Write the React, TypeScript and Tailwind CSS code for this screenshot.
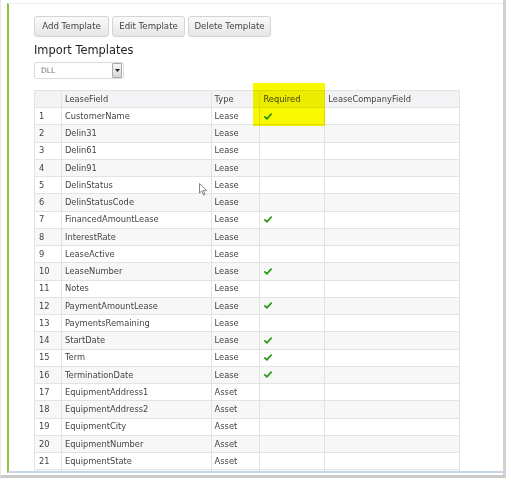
import React from 'react';

type Row = { field: string; type: string; required?: boolean };

const rows: Row[] = [
  { field: 'CustomerName', type: 'Lease', required: true },
  { field: 'Delin31', type: 'Lease' },
  { field: 'Delin61', type: 'Lease' },
  { field: 'Delin91', type: 'Lease' },
  { field: 'DelinStatus', type: 'Lease' },
  { field: 'DelinStatusCode', type: 'Lease' },
  { field: 'FinancedAmountLease', type: 'Lease', required: true },
  { field: 'InterestRate', type: 'Lease' },
  { field: 'LeaseActive', type: 'Lease' },
  { field: 'LeaseNumber', type: 'Lease', required: true },
  { field: 'Notes', type: 'Lease' },
  { field: 'PaymentAmountLease', type: 'Lease', required: true },
  { field: 'PaymentsRemaining', type: 'Lease' },
  { field: 'StartDate', type: 'Lease', required: true },
  { field: 'Term', type: 'Lease', required: true },
  { field: 'TerminationDate', type: 'Lease', required: true },
  { field: 'EquipmentAddress1', type: 'Asset' },
  { field: 'EquipmentAddress2', type: 'Asset' },
  { field: 'EquipmentCity', type: 'Asset' },
  { field: 'EquipmentNumber', type: 'Asset' },
  { field: 'EquipmentState', type: 'Asset' },
  { field: '', type: '' },
];

const Check = () => (
  <svg width="8" height="7" viewBox="0 0 9 8">
    <path d="M0.9 4.4 L3.2 6.7 L8.1 1.3" fill="none" stroke="#2f9a1c" strokeWidth="2" strokeLinecap="round" strokeLinejoin="round" />
  </svg>
);

const Button = ({ label, width }: { label: string; width: string }) => (
  <button
    className={`${width} h-[21px] rounded-[3px] border border-[#d4d4d4] bg-gradient-to-b from-[#fafafa] to-[#e6e6e6] text-[8.6px] text-[#444] flex items-center justify-center`}
  >
    {label}
  </button>
);

const cell = 'h-full flex items-center border-r border-[#e3e3e3]';

export default function App() {
  return (
    <div
      className="w-[511px] h-[481px] bg-white relative overflow-hidden"
      style={{ fontFamily: '"DejaVu Sans", Verdana, sans-serif' }}
    >
      <div className="w-[506px] h-[478px] border-l border-l-[#e8e8e8] border-r-[3px] border-r-[#d2d2d2] border-b-[3px] border-b-[#cacaca] pl-[6px] pt-[3px]">
        <div className="h-[470px] w-full border-t border-t-[#ececec] border-l-2 border-l-[#8cc43f] border-b-2 border-b-[#c6d4ec] overflow-hidden pl-[25px] pt-[12px]">
          <div className="flex gap-[3px]">
            <Button label="Add Template" width="w-[75px]" />
            <Button label="Edit Template" width="w-[73px]" />
            <Button label="Delete Template" width="w-[83px]" />
          </div>
          <div className="mt-[6px] text-[11.4px] leading-[14px] text-[#1e1e1e]">Import Templates</div>
          <div className="mt-[5px] w-[90px] h-[17px] border border-[#dcdcdc] rounded-[2px] flex items-center justify-between bg-white">
            <span className="pl-[6px] text-[7.5px] text-[#777]">DLL</span>
            <span className="w-[10px] h-[15px] mr-[1px] border border-[#aaa] rounded-[1px] bg-gradient-to-b from-[#f6f6f6] to-[#d8d8d8] flex items-center justify-center">
              <svg width="5" height="3" viewBox="0 0 5 3">
                <path d="M0 0 L5 0 L2.5 3 Z" fill="#222" />
              </svg>
            </span>
          </div>

          <div className="mt-[11px] w-[426px] border-t border-l border-[#e3e3e3] text-[8.3px] text-[#444]">
            <div className="flex h-[17px] bg-[#f3f3f5] border-b border-[#e3e3e3]">
              <div className={`${cell} w-[27px]`} />
              <div className={`${cell} w-[150px] pl-[3px]`}>LeaseField</div>
              <div className={`${cell} w-[49px] pl-[3px]`}>Type</div>
              <div className={`${cell} w-[65px] pl-[3px]`}>Required</div>
              <div className={`${cell} w-[135px] pl-[3px]`}>LeaseCompanyField</div>
            </div>
            {rows.map((r, i) => (
              <div
                key={i}
                className={`flex h-[17.25px] border-b border-[#e3e3e3] ${i % 2 === 1 ? 'bg-[#f7f7f8]' : 'bg-white'}`}
              >
                <div className={`${cell} w-[27px] pl-[4px]`}>{r.field ? i + 1 : ''}</div>
                <div className={`${cell} w-[150px] pl-[3px]`}>{r.field}</div>
                <div className={`${cell} w-[49px] pl-[3px]`}>{r.type}</div>
                <div className={`${cell} w-[65px] pl-[4px]`}>{r.required && <Check />}</div>
                <div className={`${cell} w-[135px]`} />
              </div>
            ))}
          </div>
        </div>
      </div>

      {/* highlight annotation */}
      <div className="absolute left-[253px] top-[83px] w-[72px] h-[43px] bg-[#f8f800] mix-blend-multiply" />

      {/* mouse pointer */}
      <svg className="absolute left-[199px] top-[183px]" width="9" height="13" viewBox="0 0 9 13">
        <path d="M0.5 0.5 L0.5 10 L2.8 7.9 L4.6 12 L6 11.4 L4.3 7.4 L7.6 7.4 Z" fill="#fff" stroke="#777" strokeWidth="0.9" strokeLinejoin="round" />
      </svg>
    </div>
  );
}
